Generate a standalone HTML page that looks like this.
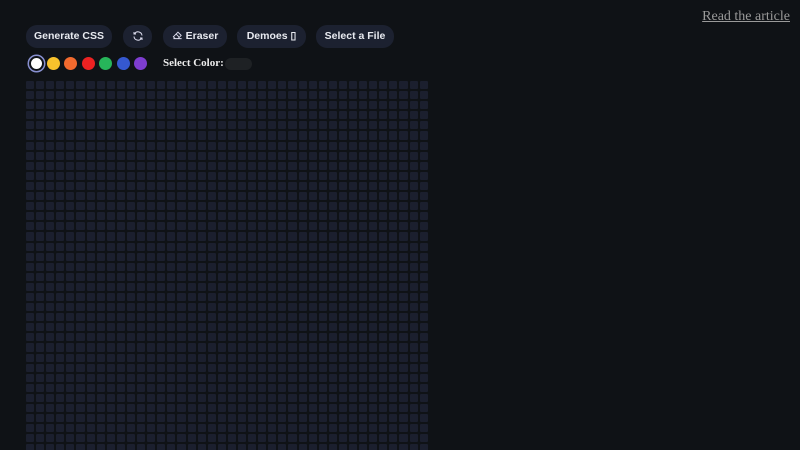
<!DOCTYPE html>
<html><head><style>
html,body{margin:0;padding:0;background:#0f1216;width:800px;height:450px;overflow:hidden;font-family:"Liberation Sans",sans-serif;}
.btn{position:absolute;top:25px;height:23px;border-radius:11px;background:#1c2130;color:#e8eaf0;font-size:10.5px;font-weight:bold;line-height:23px;text-align:center;}
.dot{position:absolute;top:57px;width:13px;height:13px;border-radius:50%;}
a{position:absolute;right:10px;top:9px;color:#9a9a9a;font-family:"Liberation Serif",serif;font-size:14px;}
.grid{position:absolute;left:26px;top:81px;width:404px;height:369px;overflow:hidden;display:grid;grid-template-columns:repeat(40,8.1px);grid-auto-rows:8.1px;gap:2px;}
.grid div{background:#1b1f2e;border-radius:1px;}
</style></head><body>
<a href="#">Read the article</a>
<div class="btn" style="left:26px;width:86px">Generate CSS</div>
<div class="btn" style="left:123px;width:29px"><svg width="12" height="12" viewBox="0 0 24 24" style="margin-top:5px" fill="none" stroke="#dde" stroke-width="2"><path d="M20 11A8 8 0 0 0 5.5 7M4 4v4h4M4 13a8 8 0 0 0 14.5 4M20 20v-4h-4"/></svg></div>
<div class="btn" style="left:163px;width:64px"><svg width="11" height="11" viewBox="0 0 24 24" fill="none" stroke="#dde" stroke-width="2" style="vertical-align:-1px"><path d="M7 21l-4-4 10-10 7 7-7 7zM3 21h18M9 11l6 6"/></svg> Eraser</div>
<div class="btn" style="left:237px;width:69px">Demoes &#x25AF;</div>
<div class="btn" style="left:316px;width:78px">Select a File</div>
<div class="dot" style="left:29px;top:56px;width:11px;height:11px;background:#fff;border:2px solid #0f1216;box-shadow:0 0 0 1.5px #8890d0"></div>
<div class="dot" style="left:47px;background:#f8c22c"></div>
<div class="dot" style="left:64px;background:#f26a2e"></div>
<div class="dot" style="left:82px;background:#ec2222"></div>
<div class="dot" style="left:99px;background:#27b55a"></div>
<div class="dot" style="left:117px;background:#3558d0"></div>
<div class="dot" style="left:134px;background:#7e3dd0"></div>
<div style="position:absolute;left:163px;top:57px;color:#eee;font-family:'Liberation Serif',serif;font-weight:bold;font-size:11px">Select Color:</div>
<div style="position:absolute;left:225px;top:58px;width:27px;height:12px;border-radius:6px;background:#1e2124"></div>
<div class="grid" id="g"></div>
<script>var g=document.getElementById('g'),s='';for(var i=0;i<40*37;i++)s+='<div></div>';g.innerHTML=s;</script>
</body></html>
